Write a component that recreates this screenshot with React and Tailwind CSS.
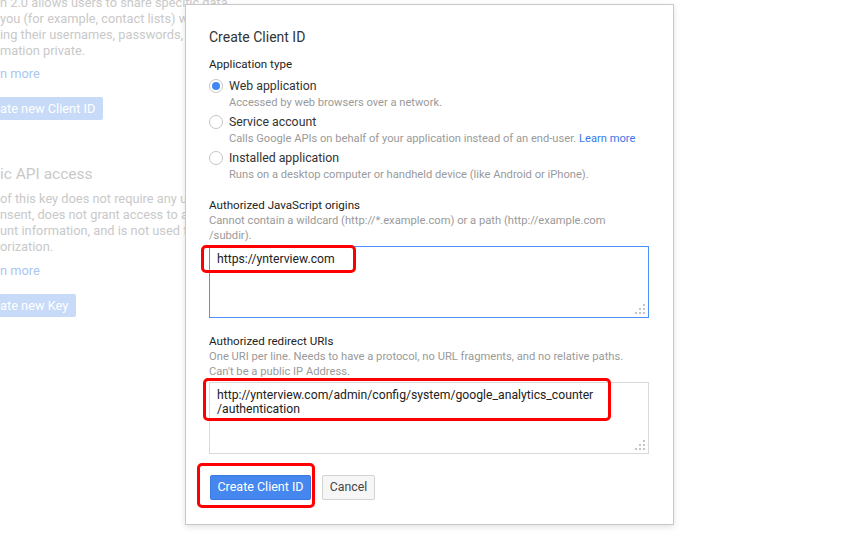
// App.jsx - "Create Client ID" dialog over the faded credentials page
import React from "react";

const FONT = { fontFamily: "Roboto, 'Liberation Sans', Arial, sans-serif" };

const APP_TYPES = [
  {
    label: "Web application",
    sub: "Accessed by web browsers over a network.",
    checked: true,
  },
  {
    label: "Service account",
    sub: "Calls Google APIs on behalf of your application instead of an end-user.",
    link: "Learn more",
  },
  {
    label: "Installed application",
    sub: "Runs on a desktop computer or handheld device (like Android or iPhone).",
  },
];

const Grip = () => (
  <svg className="absolute right-[3px] bottom-[3px]" width="10" height="10" viewBox="0 0 10 10">
    <g fill="#c4c4c4">
      <rect x="8" y="0" width="2" height="2" />
      <rect x="4" y="4" width="2" height="2" />
      <rect x="8" y="4" width="2" height="2" />
      <rect x="0" y="8" width="2" height="2" />
      <rect x="4" y="8" width="2" height="2" />
      <rect x="8" y="8" width="2" height="2" />
    </g>
  </svg>
);

const Radio = ({ checked }) => (
  <span className="relative flex h-[14px] w-[14px] shrink-0 items-center justify-center rounded-full border border-[#c6c6c6] bg-white">
    {checked && <span className="h-[8px] w-[8px] rounded-full bg-[#4285f4]" />}
  </span>
);

// page behind the modal, cut off at the left edge of the window
const Background = () => (
  <div className="mt-[-5px] w-[240px] whitespace-nowrap text-[12.8px] text-[#c9c9c9]">
    <p className="leading-[16px]">n 2.0 allows users to share specific data</p>
    <p className="leading-[16px]">you (for example, contact lists) while</p>
    <p className="leading-[16px]">ing their usernames, passwords, and other</p>
    <p className="leading-[16px]">mation private.</p>
    <p className="mt-[7px] leading-[16px] text-[#aac6f2]">n more</p>
    <div className="mt-[15px] inline-block h-[23px] rounded-r-[2px] bg-[#c7daf7] pr-[8px] leading-[23px] text-white">
      ate new Client ID
    </div>
    <p className="mt-[44px] text-[15.5px] leading-[20px]">ic API access</p>
    <p className="mt-[7px] leading-[16px]">of this key does not require any user</p>
    <p className="leading-[16px]">nsent, does not grant access to any</p>
    <p className="leading-[16px]">unt information, and is not used for</p>
    <p className="leading-[16px]">orization.</p>
    <p className="mt-[8px] leading-[16px] text-[#aac6f2]">n more</p>
    <div className="mt-[15px] inline-block h-[23px] rounded-r-[2px] bg-[#c7daf7] pr-[8px] leading-[23px] text-white">
      ate new Key
    </div>
  </div>
);

const Field = ({ label, help, lines, focused }) => (
  <div className="mt-[15px]">
    <p className="text-[11.6px] leading-[16px] text-[#222]">{label}</p>
    <p className="text-[11.2px] leading-[15px] text-[#9a9a9a]">
      {help.map((h) => (
        <span key={h} className="block">
          {h}
        </span>
      ))}
    </p>
    <div
      className={`relative mt-[3px] h-[72px] w-[440px] border bg-white px-[7px] pt-[5px] text-[12.2px] leading-[14px] text-[#222] ${
        focused ? "border-[#4d90fe]" : "border-[#d9d9d9]"
      }`}
    >
      {lines.map((l) => (
        <div key={l}>{l}</div>
      ))}
      <Grip />
    </div>
  </div>
);

const Dialog = () => (
  <div className="absolute left-[185px] top-[4px] w-[489px] border border-[#c8c8c8] bg-white pl-[23px] pr-[24px] pt-[22px] pb-[24px] shadow-[0_2px_6px_rgba(0,0,0,0.12)]">
    <h2 className="text-[14px] leading-[20px] text-[#333]">Create Client ID</h2>
    <p className="mt-[9px] text-[11.6px] leading-[16px] text-[#222]">Application type</p>
    <div className="mt-[5px] flex flex-col gap-[3px]">
      {APP_TYPES.map((t) => (
        <div key={t.label}>
          <div className="flex h-[18px] items-center gap-[6px]">
            <Radio checked={t.checked} />
            <span className="text-[12.3px] text-[#333]">{t.label}</span>
          </div>
          <p className="pl-[20px] text-[11.15px] leading-[15px] text-[#9a9a9a]">
            {t.sub}
            {t.link && <span className="text-[#3b78e7]"> {t.link}</span>}
          </p>
        </div>
      ))}
    </div>
    <Field
      label="Authorized JavaScript origins"
      help={["Cannot contain a wildcard (http://*.example.com) or a path (http://example.com", "/subdir)."]}
      lines={["https://ynterview.com"]}
      focused
    />
    <Field
      label="Authorized redirect URIs"
      help={[
        "One URI per line. Needs to have a protocol, no URL fragments, and no relative paths.",
        "Can't be a public IP Address.",
      ]}
      lines={["http://ynterview.com/admin/config/system/google_analytics_counter", "/authentication"]}
    />
    <div className="mt-[21px] flex gap-[11px] pl-[1px]">
      <button className="h-[25px] w-[101px] rounded-[2px] border border-[#3a78e2] bg-[#4687ef] text-[12.5px] text-white">
        Create Client ID
      </button>
      <button className="h-[25px] w-[53px] rounded-[2px] border border-[#d3d3d3] bg-[#f6f6f6] text-[12.3px] text-[#444]">
        Cancel
      </button>
    </div>
  </div>
);

export default function App() {
  return (
    <div className="relative h-[534px] w-[854px] overflow-hidden bg-white" style={FONT}>
      <Background />
      <Dialog />
      {/* red annotation boxes */}
      <div className="absolute left-[201px] top-[245px] h-[28px] w-[155px] rounded-[5px] border-[3px] border-[#f00]" />
      <div className="absolute left-[203px] top-[378px] h-[43px] w-[408px] rounded-[5px] border-[3px] border-[#f00]" />
      <div className="absolute left-[197px] top-[463px] h-[45px] w-[118px] rounded-[5px] border-[3px] border-[#f00]" />
    </div>
  );
}
